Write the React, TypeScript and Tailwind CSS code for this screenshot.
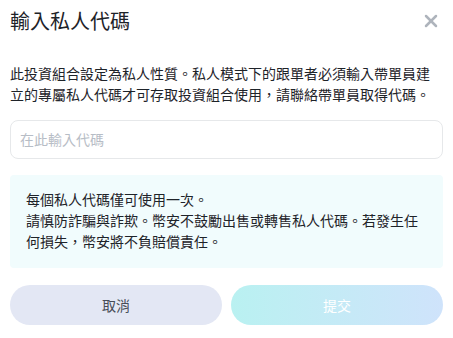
import { X } from "lucide-react";

export default function App() {
  return (
    <div
      className="w-[453px] h-[338px] bg-white px-[10px] pt-[7px] text-[#1e2329]"
      style={{ fontFamily: '"Noto Sans CJK TC", "Noto Sans", sans-serif' }}
    >
      <div className="flex items-center justify-between h-[28px]">
        <h1 className="text-[20px] font-normal leading-[28px]">輸入私人代碼</h1>
        <button className="mr-[2px] text-[#aeb4bc]">
          <X size={20} strokeWidth={3} />
        </button>
      </div>

      <p className="mt-[28px] text-[14px] leading-[21px] text-[#1e2329]">
        此投資組合設定為私人性質。私人模式下的跟單者必須輸入帶單員建立的專屬私人代碼才可存取投資組合使用，請聯絡帶單員取得代碼。
      </p>

      <div className="mt-[15px] h-[39px] rounded-[8px] border border-[#e6e8ea] flex items-center px-[9px]">
        <input
          className="w-full text-[14px] outline-none placeholder:text-[#b7bdc6] bg-transparent"
          placeholder="在此輸入代碼"
        />
      </div>

      <div className="mt-[16px] rounded-[4px] bg-[#f1fcfd] px-[16px] pt-[14px] pb-[16px] text-[14px] leading-[21px]">
        <p>每個私人代碼僅可使用一次。</p>
        <p>請慎防詐騙與詐欺。幣安不鼓勵出售或轉售私人代碼。若發生任何損失，幣安將不負賠償責任。</p>
      </div>

      <div className="mt-[17px] flex gap-[9px]">
        <button className="flex-1 h-[40px] rounded-full bg-[#e3e7f4] text-[14px] font-normal text-[#474d57]">
          取消
        </button>
        <button className="flex-1 h-[40px] rounded-full bg-gradient-to-r from-[#b9f1f1] to-[#cfe3fb] text-[14px] font-normal text-white">
          提交
        </button>
      </div>
    </div>
  );
}
